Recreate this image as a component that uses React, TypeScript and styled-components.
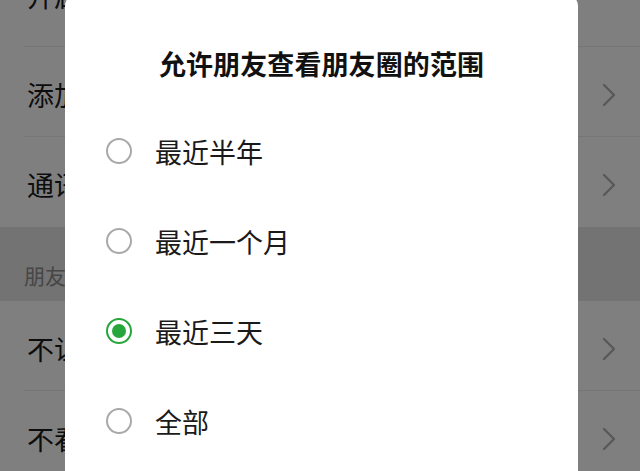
import React, { useState } from "react";
import styled, { createGlobalStyle } from "styled-components";

const GlobalStyle = createGlobalStyle`
  html, body {
    margin: 0;
    padding: 0;
    background: #ffffff;
  }
  body {
    font-family: "Noto Sans CJK SC", "Noto Sans", sans-serif;
    -webkit-font-smoothing: antialiased;
  }
`;

const Screen = styled.div`
  position: relative;
  width: 640px;
  height: 471px;
  overflow: hidden;
  background: #ffffff;
`;

/* The settings list is scrolled a little, so its first row is cut at the top */
const SettingsList = styled.div`
  display: flex;
  flex-direction: column;
  margin-top: -61px;
`;

const Row = styled.div<{ $height?: number; $divider?: boolean }>`
  position: relative;
  display: flex;
  align-items: center;
  justify-content: space-between;
  height: ${(p) => p.$height ?? 90}px;
  padding: 6px 24px 0 27px;
  box-sizing: border-box;
  background: #ffffff;
  color: #1a1a1a;
  font-size: 27px;
  &::after {
    content: "";
    display: ${(p) => (p.$divider ? "block" : "none")};
    position: absolute;
    left: 24px;
    right: 0;
    bottom: 0;
    height: 1px;
    background: #ececec;
  }
`;

const RowLabel = styled.span`
  white-space: nowrap;
  line-height: 36px;
`;

const SectionHeader = styled.div`
  display: flex;
  align-items: flex-end;
  height: 74px;
  padding: 0 0 11px 24px;
  box-sizing: border-box;
  background: #e6e6e6;
  color: #8c8c8c;
  font-size: 21px;
  line-height: 30px;
`;

const Chevron = () => (
  <svg width="14" height="24" viewBox="0 0 14 24" fill="none">
    <path
      d="M2 2 L12 12 L2 22"
      stroke="#b2b2b2"
      strokeWidth="2.4"
      strokeLinecap="round"
      strokeLinejoin="round"
    />
  </svg>
);

const Backdrop = styled.div`
  position: absolute;
  inset: 0;
  background: rgba(0, 0, 0, 0.5);
`;

const Dialog = styled.div`
  position: absolute;
  left: 65px;
  top: -6px;
  width: 513px;
  height: 540px;
  background: #ffffff;
  border-radius: 12px;
  display: flex;
  flex-direction: column;
`;

const Title = styled.h2`
  margin: 0;
  padding: 52px 0 24px;
  text-align: center;
  font-size: 27px;
  line-height: 36px;
  font-weight: 700;
  letter-spacing: 0.1px;
  color: #111111;
`;

const OptionList = styled.div`
  display: flex;
  flex-direction: column;
`;

const Option = styled.label`
  display: flex;
  align-items: center;
  gap: 23px;
  height: 90px;
  padding-left: 41px;
  cursor: pointer;
`;

const Radio = styled.span<{ $checked: boolean }>`
  flex: none;
  width: 26px;
  height: 26px;
  box-sizing: border-box;
  border-radius: 50%;
  border: 2px solid ${(p) => (p.$checked ? "#27a63b" : "#a9a9a9")};
  display: flex;
  align-items: center;
  justify-content: center;
  &::after {
    content: "";
    display: ${(p) => (p.$checked ? "block" : "none")};
    width: 14px;
    height: 14px;
    border-radius: 50%;
    background: #27a63b;
  }
`;

const OptionText = styled.span`
  font-size: 27px;
  line-height: 36px;
  color: #1a1a1a;
  padding-top: 1px;
`;

const ranges = ["最近半年", "最近一个月", "最近三天", "全部"];

export default function App() {
  const [selected, setSelected] = useState(2);

  return (
    <>
      <GlobalStyle />
      <Screen>
        <SettingsList>
          <Row $height={108} $divider>
            <RowLabel>开启朋友圈入口</RowLabel>
          </Row>
          <Row $divider>
            <RowLabel>添加我的方式</RowLabel>
            <Chevron />
          </Row>
          <Row>
            <RowLabel>通讯录黑名单</RowLabel>
            <Chevron />
          </Row>
          <SectionHeader>朋友圈</SectionHeader>
          <Row $divider>
            <RowLabel>不让他（她）看</RowLabel>
            <Chevron />
          </Row>
          <Row>
            <RowLabel>不看他（她）</RowLabel>
            <Chevron />
          </Row>
        </SettingsList>
        <Backdrop />
        <Dialog>
          <Title>允许朋友查看朋友圈的范围</Title>
          <OptionList>
            {ranges.map((label, i) => (
              <Option key={label} onClick={() => setSelected(i)}>
                <Radio $checked={selected === i} />
                <OptionText>{label}</OptionText>
              </Option>
            ))}
          </OptionList>
        </Dialog>
      </Screen>
    </>
  );
}
